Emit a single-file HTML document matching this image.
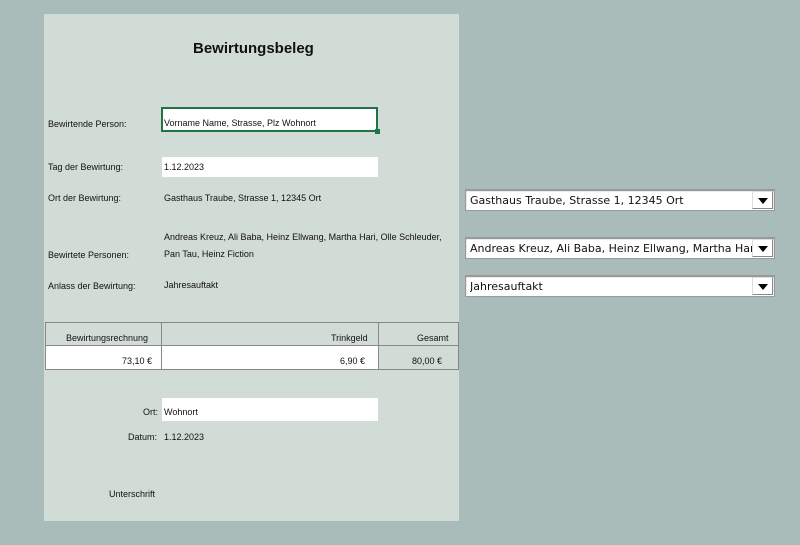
<!DOCTYPE html>
<html><head><meta charset="utf-8"><style>
body{margin:0;width:800px;height:545px;background:#aabcba;position:relative;overflow:hidden;font-family:"Liberation Sans",sans-serif;color:#111}
.a{position:absolute;white-space:nowrap}
.p{position:absolute;left:44px;top:14px;width:415px;height:507px;background:#d2dcd7}
.s{font-size:9px}
.w{position:absolute;background:#fff}
.dd{position:absolute;left:465px;width:310px;height:22px;background:#fff;border:1px solid #999;box-shadow:inset 0 1px 1px #888;font-family:"DejaVu Sans",sans-serif;font-size:11px;line-height:22px;box-sizing:border-box;padding-left:4px;overflow:hidden;white-space:nowrap}
.dd i{font-style:normal;display:inline-block;width:282px;overflow:hidden;vertical-align:top}
.dd b{position:absolute;right:1px;top:1px;width:21px;height:18px;box-sizing:border-box;background:#fff;border:1px solid #888;border-top-color:#ddd;border-left-color:#ddd}
.dd b:after{content:"";position:absolute;left:5px;top:6px;border-left:5px solid transparent;border-right:5px solid transparent;border-top:6px solid #000}
</style></head><body>
<div class="p"></div>
<div class="a" style="left:193px;top:40px;font-size:15px;font-weight:bold">Bewirtungsbeleg</div>
<div class="w" style="left:161px;top:107px;width:217px;height:25px;border:2px solid #217346;box-sizing:border-box"></div>
<div class="a" style="left:375px;top:129px;width:5px;height:5px;background:#217346"></div>
<div class="w" style="left:162px;top:157px;width:216px;height:20px"></div>
<div class="a s" style="left:48px;top:119px">Bewirtende Person:</div>
<div class="a s" style="left:164px;top:118px">Vorname Name, Strasse, Plz Wohnort</div>
<div class="a s" style="left:48px;top:162px">Tag der Bewirtung:</div>
<div class="a s" style="left:164px;top:162px">1.12.2023</div>
<div class="a s" style="left:48px;top:193px">Ort der Bewirtung:</div>
<div class="a s" style="left:164px;top:193px">Gasthaus Traube, Strasse 1, 12345 Ort</div>
<div class="a s" style="left:164px;top:232px">Andreas Kreuz, Ali Baba, Heinz Ellwang, Martha Hari, Olle Schleuder,</div>
<div class="a s" style="left:48px;top:250px">Bewirtete Personen:</div>
<div class="a s" style="left:164px;top:249px">Pan Tau, Heinz Fiction</div>
<div class="a s" style="left:48px;top:281px">Anlass der Bewirtung:</div>
<div class="a s" style="left:164px;top:280px">Jahresauftakt</div>
<div class="a" style="left:45px;top:322px;width:414px;height:48px;border:1px solid #888;box-sizing:border-box"></div>
<div class="w" style="left:46px;top:346px;width:332px;height:23px"></div>
<div class="a" style="left:45px;top:345px;width:414px;height:1px;background:#888"></div>
<div class="a" style="left:161px;top:322px;width:1px;height:48px;background:#888"></div>
<div class="a" style="left:378px;top:322px;width:1px;height:48px;background:#888"></div>
<div class="a s" style="left:66px;top:333px">Bewirtungsrechnung</div>
<div class="a s" style="left:331px;top:333px">Trinkgeld</div>
<div class="a s" style="left:417px;top:333px">Gesamt</div>
<div class="a s" style="left:122px;top:356px">73,10 €</div>
<div class="a s" style="left:340px;top:356px">6,90 €</div>
<div class="a s" style="left:412px;top:356px">80,00 €</div>
<div class="w" style="left:162px;top:398px;width:216px;height:23px"></div>
<div class="a s" style="left:143px;top:407px">Ort:</div>
<div class="a s" style="left:164px;top:407px">Wohnort</div>
<div class="a s" style="left:128px;top:432px">Datum:</div>
<div class="a s" style="left:164px;top:432px">1.12.2023</div>
<div class="a s" style="left:109px;top:489px">Unterschrift</div>
<div class="dd" style="top:189px"><i>Gasthaus Traube, Strasse 1, 12345 Ort</i><b></b></div>
<div class="dd" style="top:237px"><i>Andreas Kreuz, Ali Baba, Heinz Ellwang, Martha Hari,</i><b></b></div>
<div class="dd" style="top:275px"><i>Jahresauftakt</i><b></b></div>
</body></html>
